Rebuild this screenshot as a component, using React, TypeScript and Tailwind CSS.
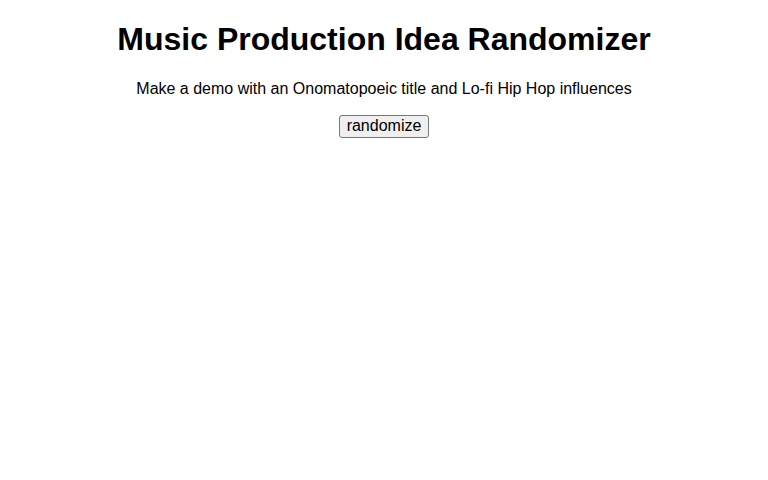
export default function App() {
  return (
    <div className="min-h-screen bg-white text-black text-center font-['Liberation_Sans',Arial,sans-serif]">
      <h1 className="text-[32px] leading-[37px] font-bold pt-[21px] mb-[22px]">
        Music Production Idea Randomizer
      </h1>
      <p className="text-base leading-[18px] mb-4">
        Make a demo with an Onomatopoeic title and Lo-fi Hip Hop influences
      </p>
      <button className="h-[23px] text-base leading-[18px] px-[7px] border border-[#767676] rounded-[3px] bg-[#efefef] text-black">
        randomize
      </button>
    </div>
  );
}
